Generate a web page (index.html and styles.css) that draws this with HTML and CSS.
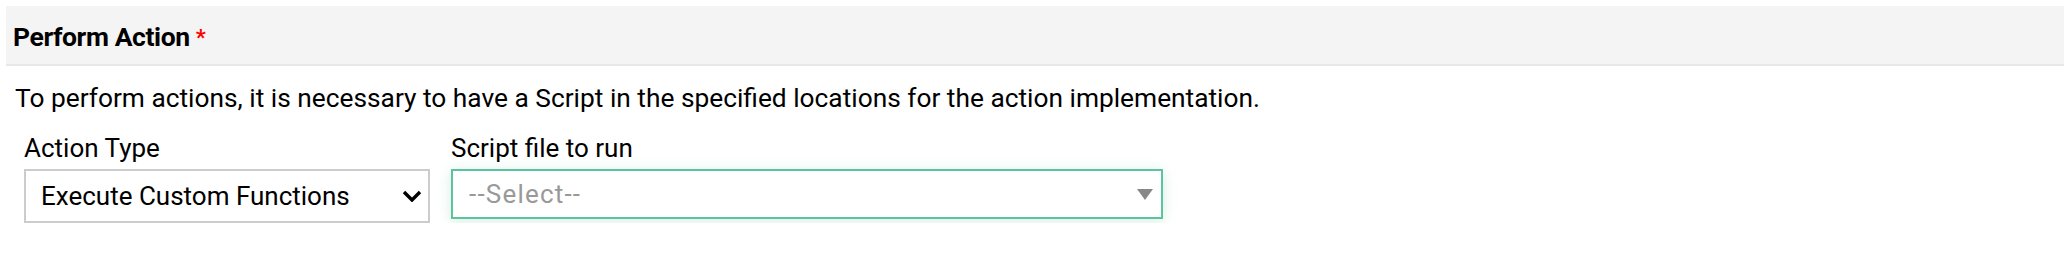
FILE: index.html
```html
<!DOCTYPE html>
<html lang="en">
<head>
  <meta charset="UTF-8" />
  <meta name="viewport" content="width=device-width, initial-scale=1.0"/>
  <title>Perform Action</title>
  <link rel="stylesheet" href="styles.css">
</head>
<body>
  <div class="section">
    <div class="section-header">
      Perform Action <span class="required">*</span>
    </div>

    <p class="hint">To perform actions, it is necessary to have a Script in the specified locations for the action implementation.</p>

    <div class="fields">
      <div class="field">
        <label for="actionType">Action Type</label>
        <div class="select-wrap select-type">
          <select id="actionType">
            <option>Execute Custom Functions</option>
          </select>
          <svg class="chevron" width="20" height="12" viewBox="0 0 20 12">
            <path d="M2 2 L10 10 L18 2" fill="none" stroke="#000" stroke-width="3.4"/>
          </svg>
        </div>
      </div>

      <div class="field">
        <label for="scriptFile">Script file to run</label>
        <div class="select-wrap select-script">
          <select id="scriptFile">
            <option>--Select--</option>
          </select>
          <svg class="caret" width="16" height="11" viewBox="0 0 16 11">
            <path d="M0 0 L16 0 L8 11 Z" fill="#888"/>
          </svg>
        </div>
      </div>
    </div>
  </div>
</body>
</html>
```

FILE: styles.css
```css
body {
  margin: 0;
  font-family: Roboto, 'Liberation Sans', sans-serif;
  color: #000;
  background: #fff;
}

.section {
  padding-top: 6px;
  padding-left: 6px;
}

.section-header {
  height: 60px;
  box-sizing: border-box;
  padding: 2px 7px 0;
  display: flex;
  align-items: center;
  background: #f4f4f4;
  border-bottom: 2px solid #e8e8e8;
  font-size: 26.5px;
  font-weight: 700;
  letter-spacing: -0.4px;
}

.section-header .required {
  color: #f00;
  font-size: 22px;
  margin-left: 6px;
  margin-top: 2px;
}

.hint {
  margin: 17px 0 0 9px;
  font-size: 26.3px;
  line-height: 30px;
}

.fields {
  display: flex;
  gap: 21px;
  margin: 20px 0 0 18px;
}

.field label {
  display: block;
  font-size: 26px;
  line-height: 30px;
  margin-bottom: 6px;
}

.select-wrap {
  position: relative;
}

select {
  appearance: none;
  -webkit-appearance: none;
  display: block;
  box-sizing: border-box;
  font-family: inherit;
  font-size: 26px;
  background: #fff;
  outline: none;
  border-radius: 0;
  margin: 0;
}

.select-type select {
  width: 406px;
  height: 54px;
  border: 2px solid #cccccc;
  padding: 0 40px 0 15px;
  color: #000;
}

.select-script select {
  width: 712px;
  height: 50px;
  border: 2px solid #5dc39d;
  padding: 0 40px 0 16px;
  color: #999;
  letter-spacing: 1.2px;
  box-shadow: 0 2px 12px rgba(93, 195, 157, 0.28);
}

.chevron {
  position: absolute;
  right: 8px;
  top: 21px;
}

.caret {
  position: absolute;
  right: 10px;
  top: 20px;
}
```
